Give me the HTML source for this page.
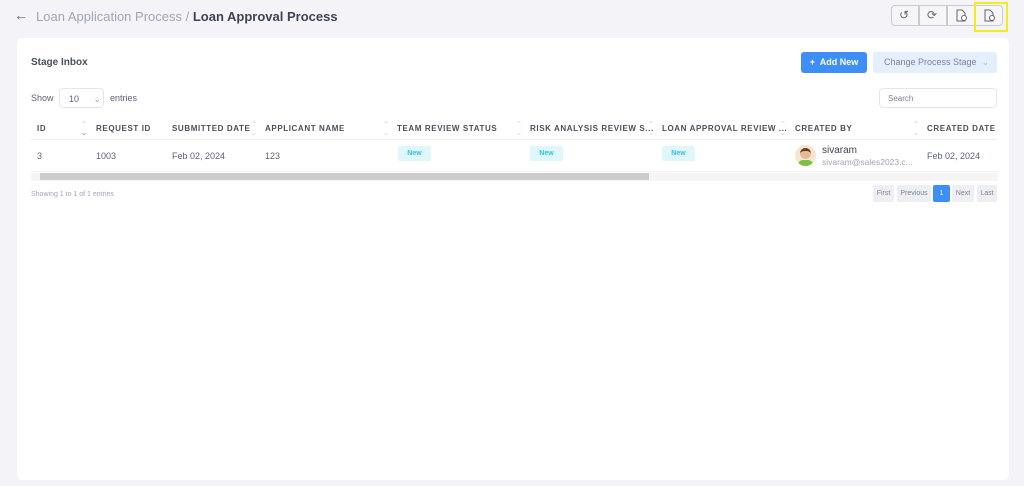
<!DOCTYPE html><html><head><style>
*{box-sizing:border-box;margin:0;padding:0}
body{width:1024px;height:486px;background:#f4f4f8;font-family:"Liberation Sans",sans-serif;position:relative;overflow:hidden;color:#3f4254}
.a{position:absolute;white-space:nowrap}
.th{font-size:8px;font-weight:bold;letter-spacing:.6px;color:#4b4f5e;top:124px}
.td{font-size:9px;color:#5e6278;top:151px}
.sort{position:absolute;top:121px;width:8px;height:16px;color:#d4d6de;font-size:8px;line-height:8px;text-align:center}
.badge{position:absolute;top:146px;width:33px;height:15px;background:#dff6fb;color:#33c1e0;font-size:7px;font-weight:bold;text-align:center;line-height:15px;border-radius:2px}
.tb{position:absolute;top:5px;width:28px;height:21px;border:1px solid #c9cbd3;background:#f6f6f9}
.pg{position:absolute;top:185px;height:17px;background:#eeeff2;color:#7e8299;font-size:7px;line-height:17px;text-align:center;border-radius:2px}
</style></head><body>
<div class="a" style="left:14px;top:7px;font-size:14px;color:#5e6278">←</div>
<div class="a" style="left:36px;top:9px;font-size:13px;color:#a1a5b7">Loan Application Process / <b style="color:#3f4254">Loan Approval Process</b></div>
<div class="tb" style="left:891px;border-radius:4px 0 0 4px"></div>
<div class="tb" style="left:919px"></div>
<div class="tb" style="left:947px"></div>
<div class="tb" style="left:975px;border-radius:0 4px 4px 0"></div>
<div class="a" style="left:899px;top:8px;font-size:12px;color:#666">↺</div>
<div class="a" style="left:927px;top:8px;font-size:12px;color:#666">⟳</div>
<svg class="a" style="left:955px;top:9px" width="13" height="13"><path d="M2 1h5l3 3v8H2z" fill="none" stroke="#666"/><circle cx="9" cy="9" r="2.5" fill="#fff" stroke="#666"/></svg>
<svg class="a" style="left:983px;top:9px" width="13" height="13"><path d="M2 1h5l3 3v8H2z" fill="none" stroke="#666"/><circle cx="9" cy="9" r="2.5" fill="#fff" stroke="#666"/></svg>
<div class="a" style="left:974px;top:2px;width:34px;height:30px;border:2px solid #f2ee1a"></div>
<div class="a" style="left:17px;top:38px;width:992px;height:442px;background:#fff;border-radius:5px"></div>
<div class="a" style="left:31px;top:57px;font-size:10px;font-weight:bold;color:#4b4f5e">Stage Inbox</div>
<div class="a" style="left:801px;top:52px;width:66px;height:21px;background:#3e8ef7;border-radius:3px;color:#fff;font-size:9px;font-weight:bold;line-height:21px;text-align:center">+&nbsp; Add New</div>
<div class="a" style="left:873px;top:52px;width:124px;height:21px;background:#e4effd;border-radius:3px;color:#7e8299;font-size:9px;line-height:21px;padding-left:11px">Change Process Stage &nbsp;<span style="color:#bbb">⌄</span></div>
<div class="a" style="left:31px;top:93px;font-size:9px;color:#5e6278">Show</div>
<div class="a" style="left:59px;top:88px;width:45px;height:20px;border:1px solid #e4e6ef;border-radius:4px;font-size:9px;padding:5px 0 0 9px;color:#5e6278">10 <span style="margin-left:12px;color:#999">⌄</span></div>
<div class="a" style="left:110px;top:93px;font-size:9px;color:#5e6278">entries</div>
<div class="a" style="left:879px;top:88px;width:118px;height:20px;border:1px solid #e4e6ef;border-radius:4px;font-size:8px;padding:5px 0 0 8px;color:#7e8299">Search</div>
<div class="a th" style="left:37px">ID</div>
<div class="a th" style="left:96px">REQUEST ID</div>
<div class="a th" style="left:172px">SUBMITTED DATE</div>
<div class="a th" style="left:265px">APPLICANT NAME</div>
<div class="a th" style="left:397px">TEAM REVIEW STATUS</div>
<div class="a th" style="left:530px">RISK ANALYSIS REVIEW S...</div>
<div class="a th" style="left:662px">LOAN APPROVAL REVIEW ...</div>
<div class="a th" style="left:795px">CREATED BY</div>
<div class="a th" style="left:927px">CREATED DATE</div>
<div class="sort" style="left:80px">⌃<br><span style="color:#999">⌄</span></div>
<div class="sort" style="left:250px">⌃<br>⌄</div>
<div class="sort" style="left:382px">⌃<br>⌄</div>
<div class="sort" style="left:515px">⌃<br>⌄</div>
<div class="sort" style="left:647px">⌃<br>⌄</div>
<div class="sort" style="left:779px">⌃<br>⌄</div>
<div class="sort" style="left:912px">⌃<br>⌄</div>
<div class="a" style="left:31px;top:139px;width:967px;height:1px;background:#eef0f4"></div>
<div class="a td" style="left:37px">3</div>
<div class="a td" style="left:96px">1003</div>
<div class="a td" style="left:172px">Feb 02, 2024</div>
<div class="a td" style="left:265px">123</div>
<div class="badge" style="left:398px">New</div>
<div class="badge" style="left:530px">New</div>
<div class="badge" style="left:662px">New</div>
<div class="a" style="left:795px;top:145px;width:21px;height:21px;border-radius:50%;background:#f3e7d3;overflow:hidden"><div style="position:absolute;left:5px;top:3px;width:11px;height:11px;border-radius:50%;background:#e8b995;border-top:3px solid #6b3a22"></div><div style="position:absolute;left:3px;top:15px;width:15px;height:8px;border-radius:5px 5px 0 0;background:#7cc242"></div></div>
<div class="a" style="left:822px;top:145px;font-size:10px;color:#3f4254">sivaram</div>
<div class="a" style="left:822px;top:157px;font-size:8.5px;color:#a1a5b7">sivaram@sales2023.c...</div>
<div class="a td" style="left:927px">Feb 02, 2024</div>
<div class="a" style="left:31px;top:171px;width:967px;height:1px;background:#eef0f4"></div>
<div class="a" style="left:31px;top:173px;width:967px;height:8px;background:#f5f5f5"></div>
<div class="a" style="left:40px;top:173px;width:609px;height:7px;background:#cdcdcd"></div>
<div class="a" style="left:31px;top:191px;font-size:7px;color:#a1a5b7">Showing 1 to 1 of 1 entries</div>
<div class="pg" style="left:873px;width:21px">First</div>
<div class="pg" style="left:897px;width:34px">Previous</div>
<div class="pg" style="left:933px;width:17px;background:#3e8ef7;color:#fff">1</div>
<div class="pg" style="left:952px;width:22px">Next</div>
<div class="pg" style="left:977px;width:20px">Last</div>
</body></html>
